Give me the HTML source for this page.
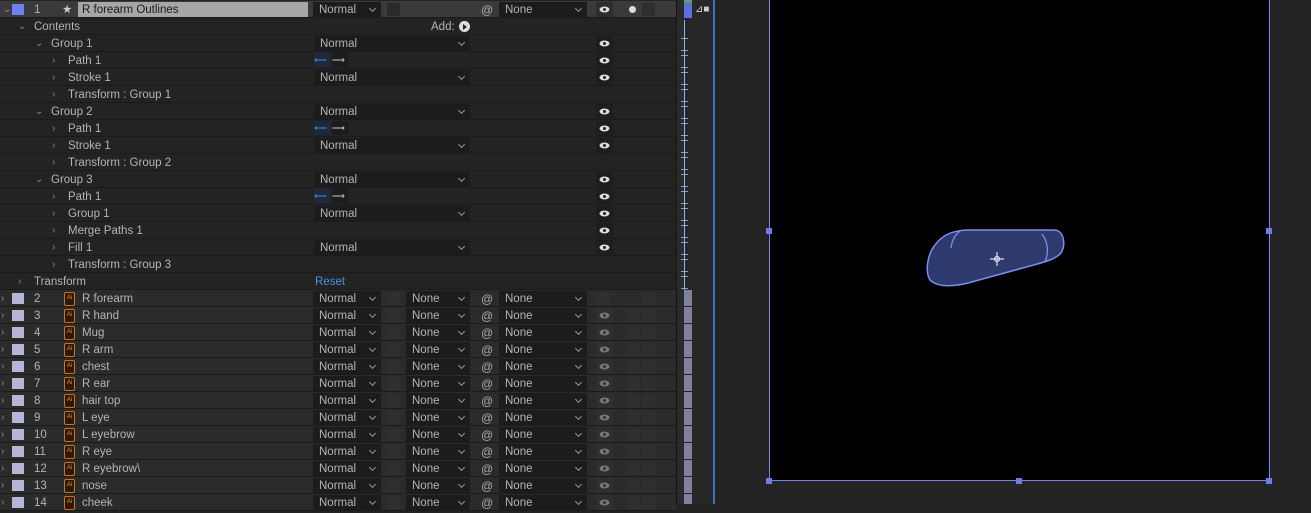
<!DOCTYPE html>
<html><head><meta charset="utf-8"><style>
*{margin:0;padding:0;box-sizing:border-box}
body{width:1311px;height:504px;background:#232323;overflow:hidden;position:relative;font-family:"Liberation Sans",sans-serif;font-size:11.5px;color:#b4b4b4}
#left{position:absolute;left:0;top:0;width:676px;height:504px;background:#232323}
.r{position:absolute;left:0;width:676px;height:17px;border-bottom:1px solid #1b1b1b}
.r span,.r i,.r b{position:absolute;font-style:normal;font-weight:normal}
.t{top:3px;white-space:nowrap;line-height:13px}
.L{background:#2b2b2b}
.chv{color:#8a8a8a;font-size:10px;top:3px}
.sq{top:3px;width:12px;height:11px;background:#b5b5d8}
.dd{top:1px;height:15px;background:#1c1c1c;padding-left:6px;line-height:16px;color:#b4b4b4}
.dd:after{content:"";position:absolute;right:6px;top:4px;width:4px;height:4px;border-right:1px solid #999;border-bottom:1px solid #999;transform:rotate(45deg)}
.bx{top:2px;width:13px;height:13px;background:#2f2f2f}
.ai{top:2px;width:11px;height:14px;border:1px solid #d2701c;border-radius:2px;background:#2a1a0a;color:#f08a30;font-size:6px;line-height:10px;text-align:center}
.sp{top:2px;color:#aaa;font-size:12px}
.eye{top:1px;width:17px;height:15px;background:#1e1e1e}
</style></head><body>
<div id="left">
<div class="r" style="top:1px;background:#3a3a3a">
<i class="chv" style="left:3px">⌄</i><i class="sq" style="left:12px;background:#6f7ff0"></i><span class="t" style="left:34px">1</span><span class="t" style="left:62px;color:#ccc">★</span>
<i style="left:78px;top:1px;width:230px;height:15px;background:#a6a6a6"></i><span class="t" style="left:82px;color:#1a1a1a">R forearm Outlines</span>
<i class="dd" style="left:313px;width:68px">Normal</i><i class="bx" style="left:387px;background:#2a2a2a"></i>
<i class="sp" style="left:481px">@</i><i class="dd" style="left:499px;width:88px">None</i>
<i class="eye" style="left:596px;background:#2e2e2e"><svg width="17" height="15"><ellipse cx="8.5" cy="7.5" rx="5" ry="3" fill="#ddd"/><circle cx="8.5" cy="7.5" r="1.5" fill="#333"/></svg></i>
<i style="left:629px;top:5px;width:7px;height:7px;border-radius:50%;background:#ddd"></i><i class="bx" style="left:642px;background:#2e2e2e"></i>
</div>
<div class="r" style="top:18px"><i class="chv" style="left:18px">⌄</i><span class="t" style="left:34px">Contents</span><span class="t" style="left:431px">Add:</span><i style="left:459px;top:3px;width:11px;height:11px;border-radius:50%;background:#ddd"></i><i style="left:463px;top:6px;width:0;height:0;border-left:4px solid #222;border-top:3px solid transparent;border-bottom:3px solid transparent"></i></div>
</div>
<div style="position:absolute;left:676px;top:0;width:1px;height:504px;background:#151515"></div>
<div style="position:absolute;left:677px;top:0;width:7px;height:504px;background:#2a2a2a"></div>
<div style="position:absolute;left:684px;top:0;width:9px;height:504px;background:#262626"></div>
<div style="position:absolute;left:684px;top:1px;width:8px;height:17px;background:#5e6ee0"></div>
<div style="position:absolute;left:684px;top:0;width:8px;height:2px;background:#4caf50"></div>
<div style="position:absolute;left:684px;top:290px;width:8px;height:214px;background:repeating-linear-gradient(#80809a 0 16px,#262626 16px 17px)"></div>
<div style="position:absolute;left:684px;top:20px;width:1px;height:270px;background:#8fb0e8"></div>
<div style="position:absolute;left:681px;top:36px;width:7px;height:254px;background:repeating-linear-gradient(transparent 0 2px,#9ab8ee 2px 3px,transparent 3px 14px,#9ab8ee 14px 15px,transparent 15px 17px);opacity:.8"></div>
<div style="position:absolute;left:693px;top:0;width:20px;height:504px;background:#272727"></div>
<div style="position:absolute;left:695px;top:4px;color:#ccc;font-size:10px">⊿■</div>
<div style="position:absolute;left:713px;top:0;width:2px;height:504px;background:#3f70c8"></div>
<div style="position:absolute;left:769px;top:-2px;width:501px;height:483px;background:#000;border:1px solid #7a84e4"></div>
<svg style="position:absolute;left:0;top:0" width="1311" height="504">
<g fill="#6d7ce8"><rect x="766" y="228" width="6" height="6"/><rect x="1266" y="228" width="6" height="6"/><rect x="766" y="478" width="6" height="6"/><rect x="1016" y="478" width="6" height="6"/><rect x="1266" y="478" width="6" height="6"/></g>
<path d="M935,245 C942,235 952,231 966,230 L1055,230 C1064,231 1066,245 1061,253 C1056,259 1045,262 1030,266 L968,283 C952,287 937,287 930,280 C925,272 927,255 935,245 Z" fill="#2e3a6e" stroke="#7d8cf0" stroke-width="1.5"/>
<path d="M951,248 C952,240 955,235 960,231" fill="none" stroke="#7d8cf0" stroke-width="1.3"/>
<path d="M1042,234 C1048,242 1049,252 1045,262" fill="none" stroke="#7d8cf0" stroke-width="1.3"/>
<g stroke="#dde" stroke-width="1.2" fill="none"><circle cx="997" cy="259" r="2.5"/><path d="M997,252V266M990,259H1004"/></g>
</svg>
<div style="position:absolute;left:0;top:35px;width:676px">
<div class="r" style="top:0"><i class="chv" style="left:35px">⌄</i><span class="t" style="left:51px">Group 1</span><i class="dd" style="left:314px;width:156px">Normal</i><i class="eye" style="left:596px"><svg width="17" height="15"><ellipse cx="8.5" cy="7.5" rx="5" ry="3" fill="#ddd"/><circle cx="8.5" cy="7.5" r="1.5" fill="#222"/></svg></i></div>
<div class="r" style="top:17px"><i class="chv" style="left:52px">›</i><span class="t" style="left:68px">Path 1</span><i style="left:314px;top:1px;width:16px;height:14px;background:#1c2a3c;color:#4a90e0;font-size:9px;line-height:14px">⟵</i><i style="left:332px;top:1px;width:16px;height:14px;background:#1c1c1c;color:#ccc;font-size:9px;line-height:14px">⟶</i><i class="eye" style="left:596px"><svg width="17" height="15"><ellipse cx="8.5" cy="7.5" rx="5" ry="3" fill="#ddd"/><circle cx="8.5" cy="7.5" r="1.5" fill="#222"/></svg></i></div>
<div class="r" style="top:34px"><i class="chv" style="left:52px">›</i><span class="t" style="left:68px">Stroke 1</span><i class="dd" style="left:314px;width:156px">Normal</i><i class="eye" style="left:596px"><svg width="17" height="15"><ellipse cx="8.5" cy="7.5" rx="5" ry="3" fill="#ddd"/><circle cx="8.5" cy="7.5" r="1.5" fill="#222"/></svg></i></div>
<div class="r" style="top:51px"><i class="chv" style="left:52px">›</i><span class="t" style="left:68px">Transform : Group 1</span></div>
<div class="r" style="top:68px"><i class="chv" style="left:35px">⌄</i><span class="t" style="left:51px">Group 2</span><i class="dd" style="left:314px;width:156px">Normal</i><i class="eye" style="left:596px"><svg width="17" height="15"><ellipse cx="8.5" cy="7.5" rx="5" ry="3" fill="#ddd"/><circle cx="8.5" cy="7.5" r="1.5" fill="#222"/></svg></i></div>
<div class="r" style="top:85px"><i class="chv" style="left:52px">›</i><span class="t" style="left:68px">Path 1</span><i style="left:314px;top:1px;width:16px;height:14px;background:#1c2a3c;color:#4a90e0;font-size:9px;line-height:14px">⟵</i><i style="left:332px;top:1px;width:16px;height:14px;background:#1c1c1c;color:#ccc;font-size:9px;line-height:14px">⟶</i><i class="eye" style="left:596px"><svg width="17" height="15"><ellipse cx="8.5" cy="7.5" rx="5" ry="3" fill="#ddd"/><circle cx="8.5" cy="7.5" r="1.5" fill="#222"/></svg></i></div>
<div class="r" style="top:102px"><i class="chv" style="left:52px">›</i><span class="t" style="left:68px">Stroke 1</span><i class="dd" style="left:314px;width:156px">Normal</i><i class="eye" style="left:596px"><svg width="17" height="15"><ellipse cx="8.5" cy="7.5" rx="5" ry="3" fill="#ddd"/><circle cx="8.5" cy="7.5" r="1.5" fill="#222"/></svg></i></div>
<div class="r" style="top:119px"><i class="chv" style="left:52px">›</i><span class="t" style="left:68px">Transform : Group 2</span></div>
<div class="r" style="top:136px"><i class="chv" style="left:35px">⌄</i><span class="t" style="left:51px">Group 3</span><i class="dd" style="left:314px;width:156px">Normal</i><i class="eye" style="left:596px"><svg width="17" height="15"><ellipse cx="8.5" cy="7.5" rx="5" ry="3" fill="#ddd"/><circle cx="8.5" cy="7.5" r="1.5" fill="#222"/></svg></i></div>
<div class="r" style="top:153px"><i class="chv" style="left:52px">›</i><span class="t" style="left:68px">Path 1</span><i style="left:314px;top:1px;width:16px;height:14px;background:#1c2a3c;color:#4a90e0;font-size:9px;line-height:14px">⟵</i><i style="left:332px;top:1px;width:16px;height:14px;background:#1c1c1c;color:#ccc;font-size:9px;line-height:14px">⟶</i><i class="eye" style="left:596px"><svg width="17" height="15"><ellipse cx="8.5" cy="7.5" rx="5" ry="3" fill="#ddd"/><circle cx="8.5" cy="7.5" r="1.5" fill="#222"/></svg></i></div>
<div class="r" style="top:170px"><i class="chv" style="left:52px">›</i><span class="t" style="left:68px">Group 1</span><i class="dd" style="left:314px;width:156px">Normal</i><i class="eye" style="left:596px"><svg width="17" height="15"><ellipse cx="8.5" cy="7.5" rx="5" ry="3" fill="#ddd"/><circle cx="8.5" cy="7.5" r="1.5" fill="#222"/></svg></i></div>
<div class="r" style="top:187px"><i class="chv" style="left:52px">›</i><span class="t" style="left:68px">Merge Paths 1</span><i class="eye" style="left:596px"><svg width="17" height="15"><ellipse cx="8.5" cy="7.5" rx="5" ry="3" fill="#ddd"/><circle cx="8.5" cy="7.5" r="1.5" fill="#222"/></svg></i></div>
<div class="r" style="top:204px"><i class="chv" style="left:52px">›</i><span class="t" style="left:68px">Fill 1</span><i class="dd" style="left:314px;width:156px">Normal</i><i class="eye" style="left:596px"><svg width="17" height="15"><ellipse cx="8.5" cy="7.5" rx="5" ry="3" fill="#ddd"/><circle cx="8.5" cy="7.5" r="1.5" fill="#222"/></svg></i></div>
<div class="r" style="top:221px"><i class="chv" style="left:52px">›</i><span class="t" style="left:68px">Transform : Group 3</span></div>
<div class="r" style="top:238px"><i class="chv" style="left:18px">›</i><span class="t" style="left:34px">Transform</span><span class="t" style="left:315px;color:#4a90e0">Reset</span></div>
</div>
<div style="position:absolute;left:0;top:290px;width:676px">
<div class="r L" style="top:0"><i class="chv" style="left:1px">›</i><i class="sq" style="left:12px"></i><span class="t" style="left:34px">2</span><i class="ai" style="left:64px">Ai</i><span class="t" style="left:82px">R forearm</span><i class="dd" style="left:313px;width:68px">Normal</i><i class="bx" style="left:387px"></i><i class="dd" style="left:406px;width:64px">None</i><i class="sp" style="left:481px">@</i><i class="dd" style="left:499px;width:88px">None</i><i class="bx" style="left:597px"></i><i class="bx" style="left:642px"></i></div>
<div class="r L" style="top:17px"><i class="chv" style="left:1px">›</i><i class="sq" style="left:12px"></i><span class="t" style="left:34px">3</span><i class="ai" style="left:64px">Ai</i><span class="t" style="left:82px">R hand</span><i class="dd" style="left:313px;width:68px">Normal</i><i class="bx" style="left:387px"></i><i class="dd" style="left:406px;width:64px">None</i><i class="sp" style="left:481px">@</i><i class="dd" style="left:499px;width:88px">None</i><i class="eye" style="left:596px;background:#2f2f2f"><svg width="17" height="15"><ellipse cx="8.5" cy="7.5" rx="5" ry="3" fill="#777"/><circle cx="8.5" cy="7.5" r="1.5" fill="#333"/></svg></i><i class="bx" style="left:627px"></i><i class="bx" style="left:642px"></i></div>
<div class="r L" style="top:34px"><i class="chv" style="left:1px">›</i><i class="sq" style="left:12px"></i><span class="t" style="left:34px">4</span><i class="ai" style="left:64px">Ai</i><span class="t" style="left:82px">Mug</span><i class="dd" style="left:313px;width:68px">Normal</i><i class="bx" style="left:387px"></i><i class="dd" style="left:406px;width:64px">None</i><i class="sp" style="left:481px">@</i><i class="dd" style="left:499px;width:88px">None</i><i class="eye" style="left:596px;background:#2f2f2f"><svg width="17" height="15"><ellipse cx="8.5" cy="7.5" rx="5" ry="3" fill="#777"/><circle cx="8.5" cy="7.5" r="1.5" fill="#333"/></svg></i><i class="bx" style="left:627px"></i><i class="bx" style="left:642px"></i></div>
<div class="r L" style="top:51px"><i class="chv" style="left:1px">›</i><i class="sq" style="left:12px"></i><span class="t" style="left:34px">5</span><i class="ai" style="left:64px">Ai</i><span class="t" style="left:82px">R arm</span><i class="dd" style="left:313px;width:68px">Normal</i><i class="bx" style="left:387px"></i><i class="dd" style="left:406px;width:64px">None</i><i class="sp" style="left:481px">@</i><i class="dd" style="left:499px;width:88px">None</i><i class="eye" style="left:596px;background:#2f2f2f"><svg width="17" height="15"><ellipse cx="8.5" cy="7.5" rx="5" ry="3" fill="#777"/><circle cx="8.5" cy="7.5" r="1.5" fill="#333"/></svg></i><i class="bx" style="left:627px"></i><i class="bx" style="left:642px"></i></div>
<div class="r L" style="top:68px"><i class="chv" style="left:1px">›</i><i class="sq" style="left:12px"></i><span class="t" style="left:34px">6</span><i class="ai" style="left:64px">Ai</i><span class="t" style="left:82px">chest</span><i class="dd" style="left:313px;width:68px">Normal</i><i class="bx" style="left:387px"></i><i class="dd" style="left:406px;width:64px">None</i><i class="sp" style="left:481px">@</i><i class="dd" style="left:499px;width:88px">None</i><i class="eye" style="left:596px;background:#2f2f2f"><svg width="17" height="15"><ellipse cx="8.5" cy="7.5" rx="5" ry="3" fill="#777"/><circle cx="8.5" cy="7.5" r="1.5" fill="#333"/></svg></i><i class="bx" style="left:627px"></i><i class="bx" style="left:642px"></i></div>
<div class="r L" style="top:85px"><i class="chv" style="left:1px">›</i><i class="sq" style="left:12px"></i><span class="t" style="left:34px">7</span><i class="ai" style="left:64px">Ai</i><span class="t" style="left:82px">R ear</span><i class="dd" style="left:313px;width:68px">Normal</i><i class="bx" style="left:387px"></i><i class="dd" style="left:406px;width:64px">None</i><i class="sp" style="left:481px">@</i><i class="dd" style="left:499px;width:88px">None</i><i class="eye" style="left:596px;background:#2f2f2f"><svg width="17" height="15"><ellipse cx="8.5" cy="7.5" rx="5" ry="3" fill="#777"/><circle cx="8.5" cy="7.5" r="1.5" fill="#333"/></svg></i><i class="bx" style="left:627px"></i><i class="bx" style="left:642px"></i></div>
<div class="r L" style="top:102px"><i class="chv" style="left:1px">›</i><i class="sq" style="left:12px"></i><span class="t" style="left:34px">8</span><i class="ai" style="left:64px">Ai</i><span class="t" style="left:82px">hair top</span><i class="dd" style="left:313px;width:68px">Normal</i><i class="bx" style="left:387px"></i><i class="dd" style="left:406px;width:64px">None</i><i class="sp" style="left:481px">@</i><i class="dd" style="left:499px;width:88px">None</i><i class="eye" style="left:596px;background:#2f2f2f"><svg width="17" height="15"><ellipse cx="8.5" cy="7.5" rx="5" ry="3" fill="#777"/><circle cx="8.5" cy="7.5" r="1.5" fill="#333"/></svg></i><i class="bx" style="left:627px"></i><i class="bx" style="left:642px"></i></div>
<div class="r L" style="top:119px"><i class="chv" style="left:1px">›</i><i class="sq" style="left:12px"></i><span class="t" style="left:34px">9</span><i class="ai" style="left:64px">Ai</i><span class="t" style="left:82px">L eye</span><i class="dd" style="left:313px;width:68px">Normal</i><i class="bx" style="left:387px"></i><i class="dd" style="left:406px;width:64px">None</i><i class="sp" style="left:481px">@</i><i class="dd" style="left:499px;width:88px">None</i><i class="eye" style="left:596px;background:#2f2f2f"><svg width="17" height="15"><ellipse cx="8.5" cy="7.5" rx="5" ry="3" fill="#777"/><circle cx="8.5" cy="7.5" r="1.5" fill="#333"/></svg></i><i class="bx" style="left:627px"></i><i class="bx" style="left:642px"></i></div>
<div class="r L" style="top:136px"><i class="chv" style="left:1px">›</i><i class="sq" style="left:12px"></i><span class="t" style="left:34px">10</span><i class="ai" style="left:64px">Ai</i><span class="t" style="left:82px">L eyebrow</span><i class="dd" style="left:313px;width:68px">Normal</i><i class="bx" style="left:387px"></i><i class="dd" style="left:406px;width:64px">None</i><i class="sp" style="left:481px">@</i><i class="dd" style="left:499px;width:88px">None</i><i class="eye" style="left:596px;background:#2f2f2f"><svg width="17" height="15"><ellipse cx="8.5" cy="7.5" rx="5" ry="3" fill="#777"/><circle cx="8.5" cy="7.5" r="1.5" fill="#333"/></svg></i><i class="bx" style="left:627px"></i><i class="bx" style="left:642px"></i></div>
<div class="r L" style="top:153px"><i class="chv" style="left:1px">›</i><i class="sq" style="left:12px"></i><span class="t" style="left:34px">11</span><i class="ai" style="left:64px">Ai</i><span class="t" style="left:82px">R eye</span><i class="dd" style="left:313px;width:68px">Normal</i><i class="bx" style="left:387px"></i><i class="dd" style="left:406px;width:64px">None</i><i class="sp" style="left:481px">@</i><i class="dd" style="left:499px;width:88px">None</i><i class="eye" style="left:596px;background:#2f2f2f"><svg width="17" height="15"><ellipse cx="8.5" cy="7.5" rx="5" ry="3" fill="#777"/><circle cx="8.5" cy="7.5" r="1.5" fill="#333"/></svg></i><i class="bx" style="left:627px"></i><i class="bx" style="left:642px"></i></div>
<div class="r L" style="top:170px"><i class="chv" style="left:1px">›</i><i class="sq" style="left:12px"></i><span class="t" style="left:34px">12</span><i class="ai" style="left:64px">Ai</i><span class="t" style="left:82px">R eyebrow\</span><i class="dd" style="left:313px;width:68px">Normal</i><i class="bx" style="left:387px"></i><i class="dd" style="left:406px;width:64px">None</i><i class="sp" style="left:481px">@</i><i class="dd" style="left:499px;width:88px">None</i><i class="eye" style="left:596px;background:#2f2f2f"><svg width="17" height="15"><ellipse cx="8.5" cy="7.5" rx="5" ry="3" fill="#777"/><circle cx="8.5" cy="7.5" r="1.5" fill="#333"/></svg></i><i class="bx" style="left:627px"></i><i class="bx" style="left:642px"></i></div>
<div class="r L" style="top:187px"><i class="chv" style="left:1px">›</i><i class="sq" style="left:12px"></i><span class="t" style="left:34px">13</span><i class="ai" style="left:64px">Ai</i><span class="t" style="left:82px">nose</span><i class="dd" style="left:313px;width:68px">Normal</i><i class="bx" style="left:387px"></i><i class="dd" style="left:406px;width:64px">None</i><i class="sp" style="left:481px">@</i><i class="dd" style="left:499px;width:88px">None</i><i class="eye" style="left:596px;background:#2f2f2f"><svg width="17" height="15"><ellipse cx="8.5" cy="7.5" rx="5" ry="3" fill="#777"/><circle cx="8.5" cy="7.5" r="1.5" fill="#333"/></svg></i><i class="bx" style="left:627px"></i><i class="bx" style="left:642px"></i></div>
<div class="r L" style="top:204px"><i class="chv" style="left:1px">›</i><i class="sq" style="left:12px"></i><span class="t" style="left:34px">14</span><i class="ai" style="left:64px">Ai</i><span class="t" style="left:82px">cheek</span><i class="dd" style="left:313px;width:68px">Normal</i><i class="bx" style="left:387px"></i><i class="dd" style="left:406px;width:64px">None</i><i class="sp" style="left:481px">@</i><i class="dd" style="left:499px;width:88px">None</i><i class="eye" style="left:596px;background:#2f2f2f"><svg width="17" height="15"><ellipse cx="8.5" cy="7.5" rx="5" ry="3" fill="#777"/><circle cx="8.5" cy="7.5" r="1.5" fill="#333"/></svg></i><i class="bx" style="left:627px"></i><i class="bx" style="left:642px"></i></div>
</div>
</body></html>
